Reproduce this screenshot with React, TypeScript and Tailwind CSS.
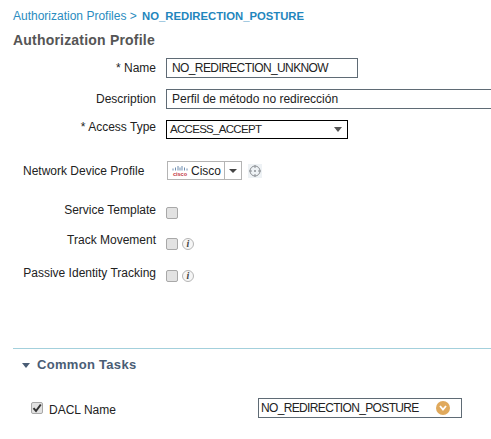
const FONT = "font-['Liberation_Sans',Arial,sans-serif]"

function Label({ children, offset }: { children: React.ReactNode; offset: string }) {
  return <div className={`w-[156px] shrink-0 text-right whitespace-nowrap text-[12px] leading-[14px] text-[#222] ${offset}`}>{children}</div>
}

function Checkbox({ checked }: { checked?: boolean }) {
  return (
    <div className="flex h-[12px] w-[12px] shrink-0 items-center justify-center rounded-[2px] border border-[#a8a8a8] bg-[#e2e2e2]">
      {checked && (
        <svg width="10" height="10" viewBox="0 0 10 10">
          <path d="M1.5 5.2 L4 8 L8.8 1.5" fill="none" stroke="#333" strokeWidth="2" />
        </svg>
      )}
    </div>
  )
}

function InfoIcon() {
  return (
    <div className="flex h-[12px] w-[12px] shrink-0 items-center justify-center rounded-full border border-[#b5b5b5] bg-[#f6f6f6] font-['Liberation_Serif',serif] text-[10px] font-bold italic leading-none text-[#444]">
      i
    </div>
  )
}

function CiscoLogo() {
  return (
    <svg width="16" height="12" viewBox="0 0 16 12">
      <g stroke="#5b7fa6" strokeWidth="0.9">
        <path d="M1 3.5V5.5M3.5 2.5V5.5M6 1V5.5M8 2.5V5.5M10 1V5.5M12.5 2.5V5.5M15 3.5V5.5" />
      </g>
      <text x="8" y="11" textAnchor="middle" fontSize="5.5" fontWeight="700" fill="#c0303a" fontFamily="Liberation Sans, sans-serif">cisco</text>
    </svg>
  )
}

export default function App() {
  return (
    <div className={`${FONT} h-[439px] w-[491px] overflow-hidden bg-white pl-[13px] pt-[9px]`}>
      <div className="flex h-[14px] items-center whitespace-nowrap text-[12px] leading-[14px] text-[#2a8cc0]">
        <span>Authorization Profiles &gt;&nbsp;</span>
        <span className="ml-[2px] text-[11.3px] font-bold text-[#1f86bd]">NO_REDIRECTION_POSTURE</span>
      </div>
      <h1 className="mt-[9px] text-[14px] font-bold leading-[16px] tracking-[0.2px] text-[#555]">Authorization Profile</h1>

      <div className="-ml-[13px] mt-[10px] flex flex-col">
        <div className="flex gap-[10px]">
          <Label offset="mt-[3px]">* Name</Label>
          <div className="flex h-[20px] w-[192px] items-center border border-[#5f6b75] pl-[5px] text-[12px] tracking-[-0.6px] text-[#222]">NO_REDIRECTION_UNKNOW</div>
        </div>
        <div className="mt-[11px] flex gap-[10px]">
          <Label offset="mt-[3px]">Description</Label>
          <div className="flex h-[20px] flex-1 items-center border border-r-0 border-[#5f6b75] pl-[5px] text-[12px] text-[#222]">Perfil de método no redirección</div>
        </div>
        <div className="mt-[11px] flex gap-[10px]">
          <Label offset="mt-[0px]">* Access Type</Label>
          <div className="flex h-[19px] w-[182px] items-center justify-between border border-black pl-[3px] pr-[5px] text-[11.5px] tracking-[-0.7px] text-[#222]">
            <span>ACCESS_ACCEPT</span>
            <span className="h-0 w-0 border-x-[4px] border-t-[5px] border-x-transparent border-t-[#555]" />
          </div>
        </div>

        <div className="mt-[22px] flex items-center">
          <div className="ml-[23px] w-[144px] text-[12px] leading-[14px] text-[#222]">Network Device Profile</div>
          <div className="flex h-[19px] w-[75px] items-center border border-[#b4b4b4]">
            <div className="flex h-full flex-1 items-center gap-[3px] pl-[4px] text-[12px] text-[#222]">
              <CiscoLogo />
              <span>Cisco</span>
            </div>
            <div className="flex h-full w-[17px] items-center justify-center border-l border-[#b4b4b4]">
              <span className="h-0 w-0 border-x-[4px] border-t-[4px] border-x-transparent border-t-[#444]" />
            </div>
          </div>
          <svg className="ml-[6px]" width="14" height="14" viewBox="0 0 14 14">
            <rect width="14" height="14" fill="#eef2f5" />
            <circle cx="7" cy="7" r="5" fill="none" stroke="#8b8f94" strokeWidth="1" />
            <path d="M7 1V4M7 10V13M1 7H4M10 7H13" stroke="#8b8f94" strokeWidth="1" />
            <circle cx="7" cy="7" r="1" fill="#8b8f94" />
          </svg>
        </div>

        <div className="mt-[23px] flex gap-[10px]">
          <Label offset="">Service Template</Label>
          <div className="mt-[4px]"><Checkbox /></div>
        </div>
        <div className="mt-[14px] flex gap-[10px]">
          <Label offset="">Track Movement</Label>
          <div className="mt-[5px] flex items-center gap-[4px]"><Checkbox /><InfoIcon /></div>
        </div>
        <div className="mt-[16px] flex gap-[10px]">
          <Label offset="">Passive Identity Tracking</Label>
          <div className="mt-[4px] flex items-center gap-[4px]"><Checkbox /><InfoIcon /></div>
        </div>
      </div>

      <div className="mt-[66px] border-t border-[#a3d0dc]">
        <div className="mt-[8px] flex items-center gap-[7px] pl-[9px]">
          <span className="h-0 w-0 border-x-[4.5px] border-t-[5px] border-x-transparent border-t-[#4a5d75]" />
          <span className="text-[13px] font-bold leading-[16px] tracking-[0.3px] text-[#4a5d75]">Common Tasks</span>
        </div>
        <div className="mt-[25px] flex items-center pl-[18px]">
          <Checkbox checked />
          <span className="ml-[6px] w-[209px] pt-[3px] text-[12px] leading-[14px] text-[#222]">DACL Name</span>
          <div className="flex h-[20px] w-[204px] items-center justify-between border border-[#5f6b75] pl-[2px] pr-[11px] text-[12px] tracking-[-0.65px] text-[#222]">
            <span>NO_REDIRECTION_POSTURE</span>
            <span className="flex h-[14px] w-[14px] items-center justify-center rounded-full bg-[#e0a95c]">
              <svg width="8" height="6" viewBox="0 0 8 6">
                <path d="M1 1 L4 4.5 L7 1" fill="none" stroke="#fff" strokeWidth="1.8" />
              </svg>
            </span>
          </div>
        </div>
      </div>
    </div>
  )
}
